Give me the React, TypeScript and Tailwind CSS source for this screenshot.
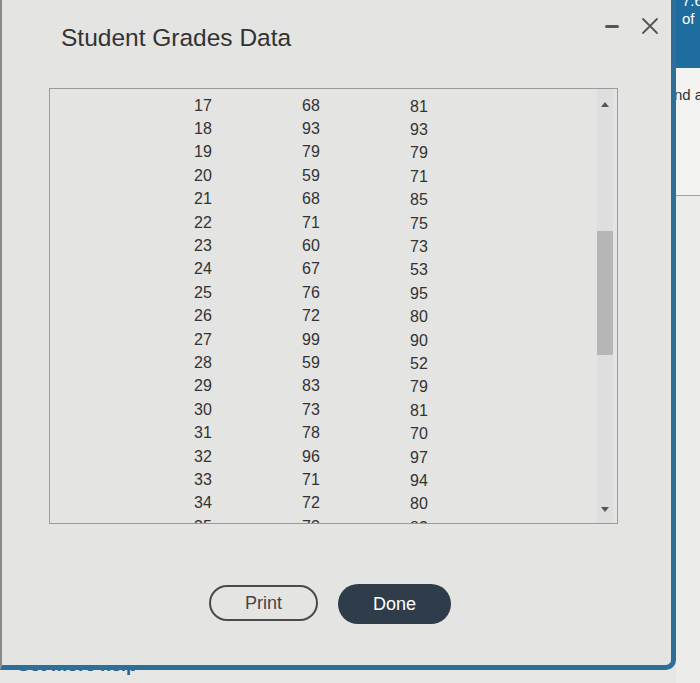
import React from "react";

const rows: [number, number, number][] = [
  [17, 68, 81],
  [18, 93, 93],
  [19, 79, 79],
  [20, 59, 71],
  [21, 68, 85],
  [22, 71, 75],
  [23, 60, 73],
  [24, 67, 53],
  [25, 76, 95],
  [26, 72, 80],
  [27, 99, 90],
  [28, 59, 52],
  [29, 83, 79],
  [30, 73, 81],
  [31, 78, 70],
  [32, 96, 97],
  [33, 71, 94],
  [34, 72, 80],
  [35, 73, 82],
];

export default function App() {
  return (
    <div
      className="relative w-[700px] h-[683px] overflow-hidden bg-[#e6e6e4] flex"
      style={{ fontFamily: '"Liberation Sans", Arial, sans-serif' }}
    >
      {/* text under the dialog */}
      <div className="absolute left-[16px] top-[655px] text-[18px] leading-[21px] font-bold text-[#2a5f86] whitespace-nowrap">
        Get more help
      </div>

      {/* dialog */}
      <div className="relative z-10 w-[676px] h-[670px] shrink-0 bg-[#e4e4e2] border-l-2 border-l-[#8a8a8a] border-r-[5px] border-b-[5px] border-[#2d6f98] rounded-br-[10px] flex flex-col">
        <div className="flex items-start h-[88px]">
          <h1 className="ml-[59px] mt-[24px] text-[24.5px] leading-[28px] text-[#333] whitespace-nowrap">
            Student Grades Data
          </h1>
          <div className="ml-auto mr-[12px] mt-[17px] flex items-center gap-[22px]">
            <div className="w-[14px] h-[3px] bg-[#555] rounded-sm" />
            <svg width="18" height="18" viewBox="0 0 18 18">
              <path d="M2 2 L16 16 M16 2 L2 16" stroke="#555" strokeWidth="1.8" strokeLinecap="round" />
            </svg>
          </div>
        </div>

        {/* table box */}
        <div className="ml-[47px] w-[569px] h-[436px] border border-[#9a9a9a] flex overflow-hidden">
          <div className="flex-1 overflow-hidden pt-[5px]">
            {rows.map((r) => (
              <div key={r[0]} className="flex h-[23.4px] items-center text-[16px] text-[#333] pl-[135px] gap-[72px] whitespace-nowrap">
                <div className="w-[36px] text-center">{r[0]}</div>
                <div className="w-[36px] text-center">{r[1]}</div>
                <div className="w-[36px] text-center translate-y-[1px]">{r[2]}</div>
              </div>
            ))}
          </div>
          <div className="w-[16px] mr-[4px] bg-[#dedede] flex flex-col items-center">
            <div className="h-[30px] flex items-center justify-center">
              <svg width="8" height="5" viewBox="0 0 8 5"><path d="M0 5 L4 0 L8 5 Z" fill="#555" /></svg>
            </div>
            <div className="mt-[112px] w-[16px] h-[124px] bg-[#b6b6b6]" />
            <div className="mt-auto h-[16px] flex items-start justify-center">
              <svg width="8" height="5" viewBox="0 0 8 5"><path d="M0 0 L8 0 L4 5 Z" fill="#555" /></svg>
            </div>
          </div>
        </div>

        {/* buttons */}
        <div className="mt-[61px] flex gap-[20px] ml-[207px]">
          <button className="w-[109px] h-[36px] rounded-full border-2 border-[#4a4a4a] text-[18px] text-[#444] flex items-center justify-center">
            Print
          </button>
          <button className="w-[113px] h-[40px] -mt-[1px] rounded-full bg-[#2f3d4b] text-[18px] text-white flex items-center justify-center">
            Done
          </button>
        </div>
      </div>

      {/* right background page */}
      <div className="flex-1 flex flex-col min-w-0">
        <div className="h-[68px] bg-[#1f6c9e] text-white text-[15px] leading-[18px] pl-[6px] whitespace-nowrap">
          <div className="-mt-[8px]">7.6</div>
          <div>of</div>
        </div>
        <div className="h-[128px] bg-[#f3f3f1] border-b border-[#a0a0a0] text-[15px] text-[#333] pt-[16px] -ml-[2px] whitespace-nowrap">
          nd a
        </div>
        <div className="flex-1 bg-[#ececea]" />
      </div>
    </div>
  );
}
